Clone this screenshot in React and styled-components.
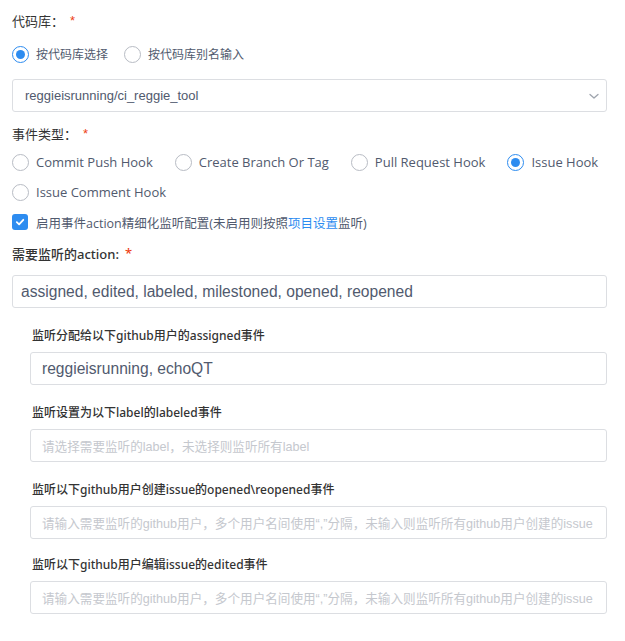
import React, { useState } from 'react';
import styled, { createGlobalStyle } from 'styled-components';

const GlobalStyle = createGlobalStyle`
  body {
    margin: 0;
    background: #fff;
    font-family: "Liberation Sans", "Noto Sans CJK SC", sans-serif;
    color: #515a6e;
  }
`;

const Page = styled.div`
  display: flex;
  flex-direction: column;
  padding: 10px 18px 20px 12px;
`;

const Label = styled.div`
  display: flex;
  align-items: center;
  height: 20px;
  font-family: ${(p) => (p.bold ? '"Noto Sans", "Noto Sans CJK SC", sans-serif' : 'inherit')};
  font-size: 13px;
  color: #333;
  font-weight: ${(p) => (p.bold ? 500 : 400)};
  margin-top: ${(p) => p.mt || 0}px;
`;

const Star = styled.span`
  color: #ed4014;
  margin-left: 6px;
  font-size: 13px;
`;

const RadioRow = styled.div`
  display: flex;
  flex-wrap: wrap;
  align-items: center;
  column-gap: ${(p) => p.gap || 22}px;
  row-gap: 10px;
  margin-top: ${(p) => p.mt || 0}px;
`;

const Option = styled.label`
  display: flex;
  align-items: center;
  height: 20px;
  font-family: "Open Sans", "Noto Sans CJK SC", sans-serif;
  font-size: ${(p) => p.size || 13}px;
  color: #515a6e;
  cursor: pointer;
`;

const RadioCircle = styled.span`
  box-sizing: border-box;
  width: 17px;
  height: 17px;
  border-radius: 50%;
  border: 1px solid ${(p) => (p.checked ? '#2d8cf0' : '#b8bcc4')};
  margin-right: 7px;
  display: flex;
  align-items: center;
  justify-content: center;
  &::after {
    content: '';
    width: 9px;
    height: 9px;
    border-radius: 50%;
    background: #2d8cf0;
    display: ${(p) => (p.checked ? 'block' : 'none')};
  }
`;

const CheckBox = styled.span`
  box-sizing: border-box;
  width: 16px;
  height: 16px;
  border-radius: 3px;
  background: #2d8cf0;
  margin-right: 8px;
  display: flex;
  align-items: center;
  justify-content: center;
`;

const Link = styled.span`
  color: #2d8cf0;
`;

const Select = styled.div`
  box-sizing: border-box;
  height: 33px;
  border: 1px solid #dcdee2;
  border-radius: 3px;
  display: flex;
  align-items: center;
  justify-content: space-between;
  padding: 0 6px 0 12px;
  font-size: 13px;
  color: #515a6e;
  margin-top: 15px;
`;

const Input = styled.div`
  box-sizing: border-box;
  height: 33px;
  border: 1px solid #dcdee2;
  border-radius: 3px;
  display: flex;
  align-items: center;
  padding: 0 ${(p) => (p.small ? 11 : 8)}px;
  font-size: ${(p) => (p.placeholder ? 12.6 : 15.6)}px;
  color: ${(p) => (p.placeholder ? '#c5c8ce' : '#515a6e')};
  white-space: nowrap;
  overflow: hidden;
  margin-top: ${(p) => p.mt || 0}px;
`;

const SubSection = styled.div`
  display: flex;
  flex-direction: column;
  padding-left: 18px;
`;

const SubGroup = styled.div`
  display: flex;
  flex-direction: column;
  margin-top: ${(p) => p.mt || 17}px;
`;

const SubLabel = styled.div`
  height: 20px;
  display: flex;
  align-items: center;
  padding-left: 2px;
  font-family: "Noto Sans", "Noto Sans CJK SC", sans-serif;
  font-size: 12px;
  font-weight: 500;
  color: #333;
  margin-bottom: 7px;
`;

const Radio = ({ checked, children, onClick, size }) => (
  <Option onClick={onClick} size={size}>
    <RadioCircle checked={checked} />
    {children}
  </Option>
);

const Chevron = () => (
  <svg width="12" height="12" viewBox="0 0 12 12" fill="none">
    <path d="M2 4.5 L6 8 L10 4.5" stroke="#9ea4ad" strokeWidth="1.3" strokeLinecap="round" strokeLinejoin="round" />
  </svg>
);

const hooks = ['Commit Push Hook', 'Create Branch Or Tag', 'Pull Request Hook', 'Issue Hook', 'Issue Comment Hook'];

const subFields = [
  { label: '监听分配给以下github用户的assigned事件', value: 'reggieisrunning, echoQT' },
  { label: '监听设置为以下label的labeled事件', placeholder: '请选择需要监听的label，未选择则监听所有label' },
  {
    label: '监听以下github用户创建issue的opened\\reopened事件',
    placeholder: '请输入需要监听的github用户，多个用户名间使用“,”分隔，未输入则监听所有github用户创建的issue',
  },
  {
    label: '监听以下github用户编辑issue的edited事件',
    placeholder: '请输入需要监听的github用户，多个用户名间使用“,”分隔，未输入则监听所有github用户创建的issue',
    mt: 15,
  },
];

export default function App() {
  const [mode, setMode] = useState(0);
  const [hook, setHook] = useState('Issue Hook');

  return (
    <>
      <GlobalStyle />
      <Page>
        <Label>
          代码库：<Star>*</Star>
        </Label>
        <RadioRow mt={14} gap={16}>
          <Radio size={12} checked={mode === 0} onClick={() => setMode(0)}>按代码库选择</Radio>
          <Radio size={12} checked={mode === 1} onClick={() => setMode(1)}>按代码库别名输入</Radio>
        </RadioRow>
        <Select>
          reggieisrunning/ci_reggie_tool
          <Chevron />
        </Select>

        <Label mt={11}>
          事件类型：<Star>*</Star>
        </Label>
        <RadioRow mt={9}>
          {hooks.map((h) => (
            <Radio key={h} checked={hook === h} onClick={() => setHook(h)}>
              {h}
            </Radio>
          ))}
        </RadioRow>
        <RadioRow mt={10}>
          <Option size={12.5}>
            <CheckBox>
              <svg width="10" height="10" viewBox="0 0 10 10">
                <path d="M1.8 5.2 L4.1 7.3 L8.3 2.8" stroke="#fff" strokeWidth="1.8" fill="none" strokeLinecap="round" strokeLinejoin="round" />
              </svg>
            </CheckBox>
            启用事件action精细化监听配置(未启用则按照<Link>项目设置</Link>监听)
          </Option>
        </RadioRow>

        <Label mt={11} bold>
          需要监听的action:<Star>*</Star>
        </Label>
        <Input mt={12}>assigned, edited, labeled, milestoned, opened, reopened</Input>

        <SubSection>
          {subFields.map((f) => (
            <SubGroup key={f.label} mt={f.mt}>
              <SubLabel>{f.label}</SubLabel>
              <Input small placeholder={f.placeholder ? 1 : 0}>
                {f.value || f.placeholder}
              </Input>
            </SubGroup>
          ))}
        </SubSection>
      </Page>
    </>
  );
}
